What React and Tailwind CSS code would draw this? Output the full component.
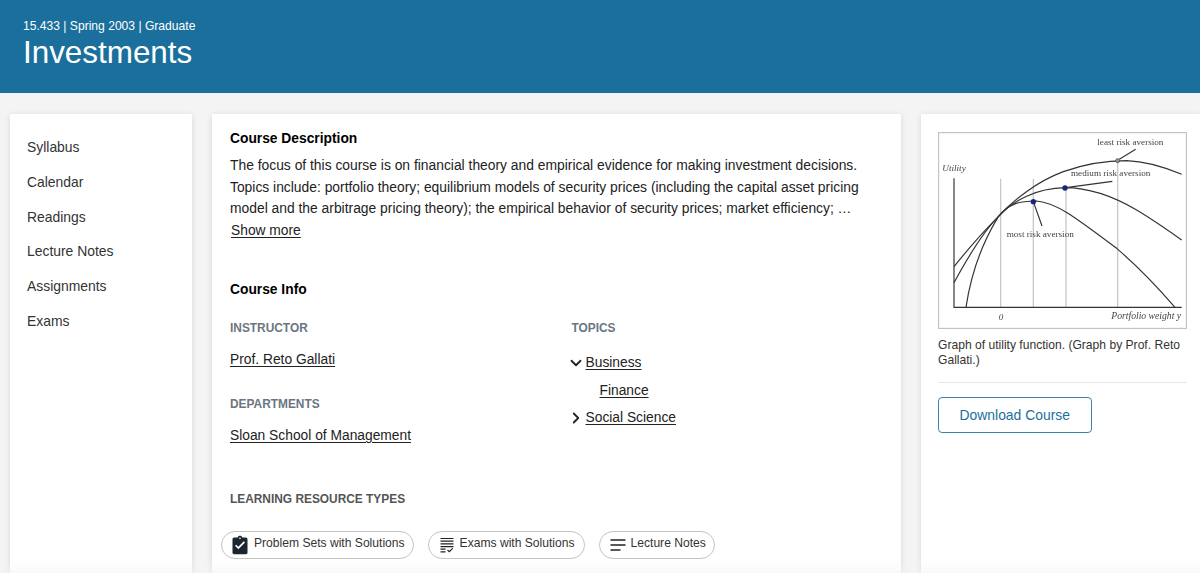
import { ChevronDown, ChevronRight } from "lucide-react";

const navItems = ["Syllabus", "Calendar", "Readings", "Lecture Notes", "Assignments", "Exams"];

const TextLink = ({ children, className = "" }) => (
  <a className={`underline underline-offset-2 decoration-1 text-[13.8px] leading-[17px] text-[#222] ${className}`}>{children}</a>
);

const Label = ({ children, className = "" }) => (
  <div className={`text-[11.9px] leading-[14px] font-bold text-[#6a7682] ${className}`}>{children}</div>
);

const ClipboardIcon = () => (
  <svg viewBox="0 0 24 24" className="w-[20px] h-[20px] fill-[#1d2530]">
    <path d="M19 3h-4.2C14.4 1.8 13.3 1 12 1s-2.4.8-2.8 2H5c-1.1 0-2 .9-2 2v16c0 1.1.9 2 2 2h14c1.1 0 2-.9 2-2V5c0-1.100-.9-2-2-2zm-9 14l-4-4 1.400-1.400 2.600 2.600 6.600-6.600L18 9l-8 8zm2-12c-.6 0-1-.4-1-1s.4-1 1-1 1 .4 1 1-.4 1-1 1z" />
  </svg>
);

const ExamIcon = () => (
  <svg viewBox="0 0 16 16" className="w-4 h-4 fill-none stroke-[#222] stroke-[1.2]">
    <path d="M0.500 1.500h13M0.500 4.200h13M0.500 6.900h13M0.500 9.600h13M0.500 12.200h5M0.500 14.800h5" />
    <path d="M7.500 13l1.800 1.700 3.400-3.400" />
  </svg>
);

const NotesIcon = () => (
  <svg viewBox="0 0 16 16" className="w-4 h-4 fill-none stroke-[#222] stroke-[1.300]">
    <path d="M0.500 3h15M0.500 8h15M0.500 13h10" />
  </svg>
);

const Chip = ({ icon, children, className = "" }) => (
  <div className={`flex items-center h-[28px] rounded-full border border-[#c4c4c4] bg-white text-[12.100px] text-[#333] ${className}`}>
    {icon}
    <span className="-mt-[3px]">{children}</span>
  </div>
);

const UtilityGraph = () => (
  <svg viewBox="24 36 747 591" className="block w-[249px] h-[197px] blur-[0.3px]">
    <rect x="25" y="37" width="745" height="589" fill="#fff" stroke="#c2c2c2" strokeWidth="5" />
    <g stroke="#c9c9c9" strokeWidth="4">
      <path d="M212 176V562M310 176V562M408 200V562M563 122V562" />
    </g>
    <g fill="none" stroke="#333" strokeWidth="3.500">
      <path d="M72 175V562H755" />
      <path d="M72 440C120 380 170 325 205 290C250 240 320 185 400 155C470 130 530 122 590 122C650 124 700 140 755 163" />
      <path d="M72 488C120 400 170 325 205 290C250 240 320 205 405 203C480 203 560 235 620 270C670 300 720 335 755 360" />
      <path d="M108 562C120 480 150 380 205 290C235 250 270 243 320 243C380 248 440 295 560 385C630 445 690 510 735 562" />
      <path d="M568 118L617 88M408 203L547 184M310 245L336 318" />
    </g>
    <circle cx="310" cy="245" r="8" fill="#1a237e" />
    <circle cx="405" cy="204" r="8" fill="#1a237e" />
    <circle cx="563" cy="122" r="6" fill="#999" stroke="#333" strokeWidth="2" />
    <g fontFamily="'Liberation Serif', serif" fontSize="27.500" fill="#444">
      <text x="502" y="75">least risk aversion</text>
      <text x="423" y="169">medium risk aversion</text>
      <text x="230" y="350">most risk aversion</text>
      <text x="37" y="154" fontStyle="italic">Utility</text>
      <text x="206" y="600" fontStyle="italic">0</text>
      <text x="544" y="598" fontStyle="italic" fontSize="29">Portfolio weight y</text>
    </g>
  </svg>
);

export default function App() {
  return (
    <div className="relative h-screen overflow-hidden flex flex-col bg-[#f4f4f4] font-['Liberation_Sans',Arial,sans-serif]">
      <header className="h-[93px] shrink-0 bg-[#1b6f9c] text-white pl-[23px] pt-[19px]">
        <div className="text-[12.100px] leading-[15px]">15.433 | Spring 2003 | Graduate</div>
        <h1 className="text-[31.400px] leading-[37px]">Investments</h1>
      </header>

      <div className="flex items-start flex-1 pt-[21px] pl-[10px] gap-5">
        <nav className="w-[182px] h-[600px] shrink-0 bg-white shadow-[0_1px_6px_rgba(0,0,0,0.12)] pl-[17px] pt-[25px] flex flex-col gap-[17.800px] text-[13.900px] leading-[17px] text-[#333]">
          {navItems.map((item) => (
            <a key={item}>{item}</a>
          ))}
        </nav>

        <main className="w-[689px] h-[600px] shrink-0 bg-white shadow-[0_1px_6px_rgba(0,0,0,0.12)] pl-[18px] pt-[16px] text-[#222]">
          <h2 className="text-[13.800px] leading-[17px] font-bold text-black">Course Description</h2>
          <p className="mt-[8px] w-[640px] text-[13.850px] leading-[21.600px]">
            The focus of this course is on financial theory and empirical evidence for making investment decisions.
            Topics include: portfolio theory; equilibrium models of security prices (including the capital asset pricing
            model and the arbitrage pricing theory); the empirical behavior of security prices; market efficiency; …
          </p>
          <TextLink className="block mt-[2px] ml-px">Show more</TextLink>

          <h2 className="mt-[42px] text-[13.800px] leading-[17px] font-bold text-black">Course Info</h2>

          <div className="mt-[23px] flex">
            <div className="w-[341.500px]">
              <Label>INSTRUCTOR</Label>
              <TextLink className="block mt-[16px]">Prof. Reto Gallati</TextLink>
              <Label className="mt-[29px]">DEPARTMENTS</Label>
              <TextLink className="block mt-[16px]">Sloan School of Management</TextLink>
            </div>
            <div>
              <Label>TOPICS</Label>
              <div className="mt-[19px] flex items-center">
                <ChevronDown className="w-[18px] h-[18px] text-[#222] -ml-[5px] mr-px" strokeWidth={2.400} />
                <TextLink>Business</TextLink>
              </div>
              <TextLink className="block mt-[10px] ml-[28px]">Finance</TextLink>
              <div className="mt-[10px] flex items-center">
                <ChevronRight className="w-[18px] h-[18px] text-[#222] -ml-[5px] mr-px" strokeWidth={2.400} />
                <TextLink>Social Science</TextLink>
              </div>
            </div>
          </div>

          <Label className="mt-[48px] text-[#555]">LEARNING RESOURCE TYPES</Label>

          <div className="mt-[25px] -ml-[9px] flex gap-[14px]">
            <Chip icon={<ClipboardIcon />} className="pl-[8px] pr-[8px] gap-[4px]">Problem Sets with Solutions</Chip>
            <Chip icon={<ExamIcon />} className="pl-[11px] pr-[9px] gap-[4px]">Exams with Solutions</Chip>
            <Chip icon={<NotesIcon />} className="pl-[10px] pr-[8px] gap-[5px]">Lecture Notes</Chip>
          </div>
        </main>

        <aside className="flex-1 h-[600px] bg-white shadow-[0_1px_6px_rgba(0,0,0,0.12)] pl-[17px] pr-[13px] pt-[18px]">
          <UtilityGraph />
          <p className="mt-[9px] text-[12.100px] leading-[15px] text-[#333]">
            Graph of utility function. (Graph by Prof. Reto Gallati.)
          </p>
          <div className="mt-[14px] border-t border-[#e8e8e8]" />
          <button className="mt-[14px] w-[153.500px] h-[36px] rounded-[4px] border-[1.5px] border-[#3d84a8] text-[13.900px] text-[#1b6f9c]">
            Download Course
          </button>
        </aside>
      </div>

      <div className="absolute bottom-0 left-0 right-0 h-[14px] pointer-events-none bg-linear-to-b from-transparent to-[#f4f4f4]/50" />
    </div>
  );
}
